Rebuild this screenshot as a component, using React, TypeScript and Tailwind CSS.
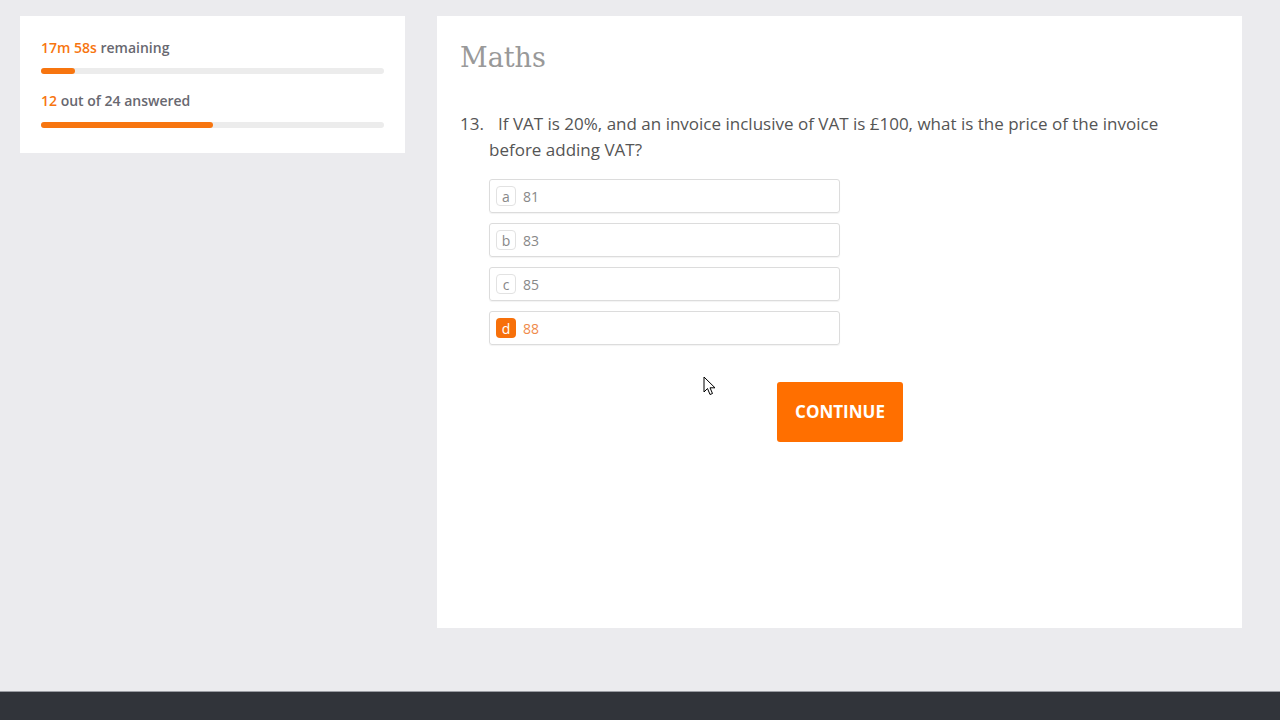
const options = [
  { key: "a", value: "81" },
  { key: "b", value: "83" },
  { key: "c", value: "85" },
  { key: "d", value: "88", selected: true },
];

function Progress({ pct }: { pct: number }) {
  return (
    <div className="h-[6px] w-full rounded-full bg-[#ececec]">
      <div className="h-full rounded-full bg-[#f7750f]" style={{ width: `${pct}%` }} />
    </div>
  );
}

export default function App() {
  return (
    <div
      className="relative flex h-screen flex-col bg-[#ebebee] text-[#666]"
      style={{ fontFamily: '"Open Sans", "Noto Sans", sans-serif' }}
    >
      <div className="flex flex-1 gap-[32px] pl-[20px] pt-[16px]">
        <div className="h-[137px] w-[385px] bg-white px-[21px] pt-[22px]">
          <p className="text-[14px] font-semibold leading-[20px] text-[#686870]">
            <span className="text-[#f7750f]">17m 58s</span> remaining
          </p>
          <div className="mt-[10px]">
            <Progress pct={10} />
          </div>
          <p className="mt-[17px] text-[14px] font-semibold leading-[20px] text-[#686870]">
            <span className="text-[#f7750f]">12</span> out of 24 answered
          </p>
          <div className="mt-[11px]">
            <Progress pct={50} />
          </div>
        </div>

        <div className="h-[612px] w-[805px] bg-white pl-[23px] pr-[52px] pt-[24px]">
          <h1
            className="text-[27px] font-light leading-[36px] text-[#999]"
            style={{ fontFamily: '"DejaVu Serif", "Liberation Serif", serif' }}
          >
            Maths
          </h1>
          <div className="mt-[35px] flex text-[17px] leading-[26px] text-[#555]">
            <span className="w-[29px] shrink-0">13.</span>
            <p className="indent-[9px]">
              If VAT is 20%, and an invoice inclusive of VAT is £100, what is the price of the invoice
              before adding VAT?
            </p>
          </div>
          <div className="ml-[29px] mt-[16px] flex w-[351px] flex-col gap-[10px]">
            {options.map((o) => (
              <div
                key={o.key}
                className="flex h-[34px] items-center gap-[7px] rounded-[3px] border border-[#dcdcdc] px-[6px] shadow-[0_1px_1px_rgba(0,0,0,0.05)]"
              >
                <span
                  className={
                    o.selected
                      ? "flex h-[20px] w-[20px] items-center justify-center rounded-[4px] bg-[#f7700a] text-[14px] text-white"
                      : "flex h-[20px] w-[20px] items-center justify-center rounded-[4px] border border-[#e2e2e2] text-[14px] text-[#888]"
                  }
                >
                  {o.key}
                </span>
                <span className={o.selected ? "text-[14px] text-[#f08a4a]" : "text-[14px] text-[#888]"}>
                  {o.value}
                </span>
              </div>
            ))}
          </div>
          <div className="mt-[37px] flex pl-[317px]">
            <button className="h-[60px] w-[126px] rounded-[3px] bg-[#ff6f00] text-[17px] font-bold text-white">
              CONTINUE
            </button>
          </div>
        </div>
      </div>
      <div className="h-[29px] border-t border-[#9a9ca2] bg-[#31343a]" />

      <svg className="absolute left-[703px] top-[376px]" width="14" height="21" viewBox="0 0 14 21">
        <path
          d="M1 1 L1 16 L4.5 12.5 L7 18.5 L9.5 17.5 L7 11.8 L12 11.8 Z"
          fill="white"
          stroke="black"
          strokeWidth="1"
          strokeLinejoin="round"
        />
      </svg>
    </div>
  );
}
